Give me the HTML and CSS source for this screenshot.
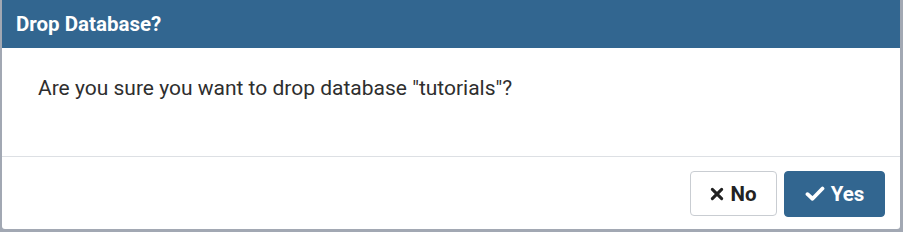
FILE: index.html
```html
<!DOCTYPE html>
<html>
<head>
<meta charset="utf-8">
<link rel="stylesheet" href="styles.css">
</head>
<body>
<div class="dialog">
  <div class="header">Drop Database?</div>
  <div class="content">Are you sure you want to drop database "tutorials"?</div>
  <div class="footer">
    <button class="btn btn-secondary">
      <svg class="icon" viewBox="0 0 12 12" width="14" height="14"><path d="M2 2 L10 10 M10 2 L2 10" stroke="#222" stroke-width="2.6" stroke-linecap="round" fill="none"/></svg>
      <span>No</span>
    </button>
    <button class="btn btn-primary">
      <svg class="icon" viewBox="0 0 16 12" width="20" height="15"><path d="M2 6.5 L6 10.2 L14 2" stroke="#fff" stroke-width="3" stroke-linecap="round" stroke-linejoin="round" fill="none"/></svg>
      <span>Yes</span>
    </button>
  </div>
</div>
</body>
</html>
```
FILE: styles.css
```css
html, body {
  margin: 0;
  height: 100%;
}
body {
  background: #a2a8b3;
  padding: 0 3px 3px 2px;
  box-sizing: border-box;
  font-family: Roboto, "Liberation Sans", sans-serif;
}
.dialog {
  height: 100%;
  background: #fff;
  display: flex;
  flex-direction: column;
  border-radius: 0 0 3px 3px;
  overflow: hidden;
}
.header {
  height: 48px;
  background: #326690;
  color: #fff;
  font-weight: 700;
  font-size: 20.5px;
  display: flex;
  align-items: center;
  padding-left: 14px;
  box-sizing: border-box;
  flex: none;
}
.content {
  height: 109px;
  box-sizing: border-box;
  padding: 28px 0 0 36px;
  font-size: 21px;
  line-height: 25px;
  color: #2e2e2e;
  border-bottom: 1px solid #dde0e4;
  flex: none;
}
.footer {
  flex: 1;
  display: flex;
  justify-content: flex-end;
  align-items: center;
  gap: 7px;
  padding-right: 15px;
}
.btn {
  display: flex;
  align-items: center;
  justify-content: center;
  gap: 6px;
  height: 45px;
  border-radius: 4px;
  font-family: Roboto, "Liberation Sans", sans-serif;
  font-weight: 700;
  font-size: 20.5px;
  box-sizing: border-box;
  padding: 0;
  margin-top: 1px;
}
.btn-secondary {
  width: 87px;
  background: #fff;
  color: #222;
  border: 1px solid #c9cdd2;
}
.btn-primary {
  width: 101px;
  height: 46px;
  background: #326690;
  color: #fff;
  border: 1px solid #326690;
}
.icon {
  display: block;
}
```
